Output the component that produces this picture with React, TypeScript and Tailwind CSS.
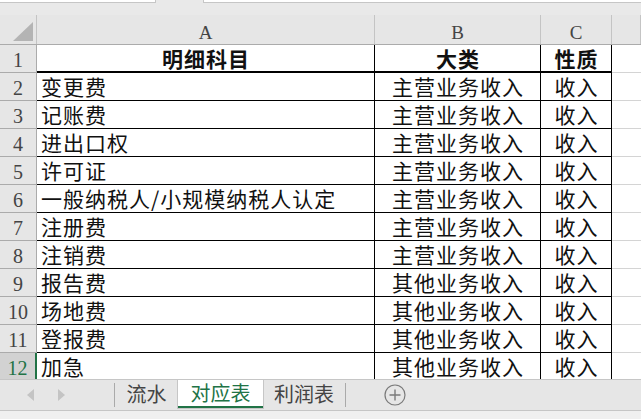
import React from 'react';

const rows: [string, string, string][] = [
  ['变更费', '主营业务收入', '收入'],
  ['记账费', '主营业务收入', '收入'],
  ['进出口权', '主营业务收入', '收入'],
  ['许可证', '主营业务收入', '收入'],
  ['一般纳税人/小规模纳税人认定', '主营业务收入', '收入'],
  ['注册费', '主营业务收入', '收入'],
  ['注销费', '主营业务收入', '收入'],
  ['报告费', '其他业务收入', '收入'],
  ['场地费', '其他业务收入', '收入'],
  ['登报费', '其他业务收入', '收入'],
  ['加急', '其他业务收入', '收入'],
];

const cjk = { fontFamily: '"Noto Sans CJK SC", "Noto Sans", sans-serif' };
const serif = { fontFamily: '"Liberation Serif", "DejaVu Serif", serif' };

const grid = 'grid grid-cols-[37px_338px_166px_71px_1fr]';

const App: React.FC = () => {
  return (
    <div className="w-[641px] h-[419px] overflow-hidden bg-white flex flex-col text-[#111]" style={cjk}>
      {/* formula bar remnant */}
      <div className="h-[15px] bg-[#e9e9e9] flex gap-[47px] shrink-0">
        <div className="w-[156px] h-[3px] bg-white border-b border-r border-[#c6c6c6]"></div>
        <div className="flex-1 h-[3px] bg-white border-b border-l border-[#c6c6c6]"></div>
      </div>

      {/* column headers */}
      <div className={`${grid} h-[30px] bg-[#e6e6e6] border-b border-[#ababab] shrink-0 text-[#444] text-[19px] leading-none`} style={serif}>
        <div className="relative border-r border-[#c4c4c4]">
          <svg className="absolute right-[3px] bottom-[3px]" width="20" height="19" viewBox="0 0 20 19">
            <polygon points="20,0 20,19 0,19" fill="#b4b4b4" />
          </svg>
        </div>
        {['A', 'B', 'C', ''].map((c, i) => (
          <div key={i} className="flex items-center justify-center border-r border-[#c4c4c4] pt-[6px]">{c}</div>
        ))}
      </div>

      {/* sheet body */}
      <div className="flex-1 overflow-hidden leading-none">
        <div className={`${grid} h-[28px]`}>
          <div className="bg-[#e6e6e6] border-r border-b border-[#ababab] flex items-center justify-center text-[20px] text-[#444] pt-[2px]" style={serif}>1</div>
          <div className="flex items-center justify-center border-r border-b-2 border-black text-[21px] font-bold tracking-[1px] pl-[1px]">明细科目</div>
          <div className="flex items-center justify-center border-r border-b-2 border-black text-[21px] font-bold tracking-[1px] pl-[1px]">大类</div>
          <div className="flex items-center justify-center border-r border-b-2 border-black text-[21px] font-bold tracking-[1px] pl-[1px]">性质</div>
          <div className="border-b border-[#d4d4d4]"></div>
        </div>
        {rows.map(([a, b, c], i) => {
          const last = i === rows.length - 1;
          return (
            <div key={i} className={`${grid} h-[28px]`}>
              <div
                className={`flex items-center justify-center text-[20px] border-b pt-[2px] ${
                  last
                    ? 'bg-[#d2d2d2] text-[#217346] border-r-2 border-r-[#217346] border-b-[#ababab]'
                    : 'bg-[#e6e6e6] text-[#444] border-r border-[#ababab]'
                }`}
                style={serif}
              >
                {i + 2}
              </div>
              <div className="flex items-center pl-[4px] border-r border-b border-black text-[21px] tracking-[1px] whitespace-nowrap">{a}</div>
              <div className="flex items-center justify-center pl-[1px] border-r border-b border-black text-[21px] tracking-[1px]">{b}</div>
              <div className="flex items-center justify-center pl-[1px] border-r border-b border-black text-[21px] tracking-[1px]">{c}</div>
              <div className="border-b border-[#d4d4d4]"></div>
            </div>
          );
        })}
      </div>

      {/* sheet tabs */}
      <div className="h-[31px] bg-[#e6e6e6] border-t border-[#c6c6c6] flex items-stretch shrink-0 text-[20px] leading-none text-[#444]">
        <div className="w-[114px] flex items-center">
          <svg className="ml-[27px]" width="7" height="12" viewBox="0 0 7 12">
            <polygon points="7,0 7,12 0,6" fill="#c4c4c4" />
          </svg>
          <svg className="ml-[24px]" width="7" height="12" viewBox="0 0 7 12">
            <polygon points="0,0 0,12 7,6" fill="#c4c4c4" />
          </svg>
        </div>
        <div className="my-[3px] w-px bg-[#aaa]"></div>
        <div className="w-[63px] flex items-center justify-center pb-[2px]">流水</div>
        <div className="w-[85px] bg-white flex items-center justify-center text-[#217346] border-b-2 border-[#217346] mb-[2px] pb-[1px] shadow-[0_0_0_1px_#c6c6c6]">对应表</div>
        <div className="w-[82px] flex items-center justify-center pb-[2px]">利润表</div>
        <div className="my-[3px] w-px bg-[#aaa]"></div>
        <div className="ml-[38px] flex items-center">
          <svg width="22" height="22" viewBox="0 0 22 22">
            <circle cx="11" cy="11" r="10" fill="none" stroke="#7a7a7a" strokeWidth="1.2" />
            <path d="M11 5.5v11M5.5 11h11" stroke="#7a7a7a" strokeWidth="1.4" />
          </svg>
        </div>
      </div>
      <div className="h-[9px] bg-[#f0f0f0] border-t border-[#c6c6c6] shrink-0"></div>
    </div>
  );
};

export default App;
